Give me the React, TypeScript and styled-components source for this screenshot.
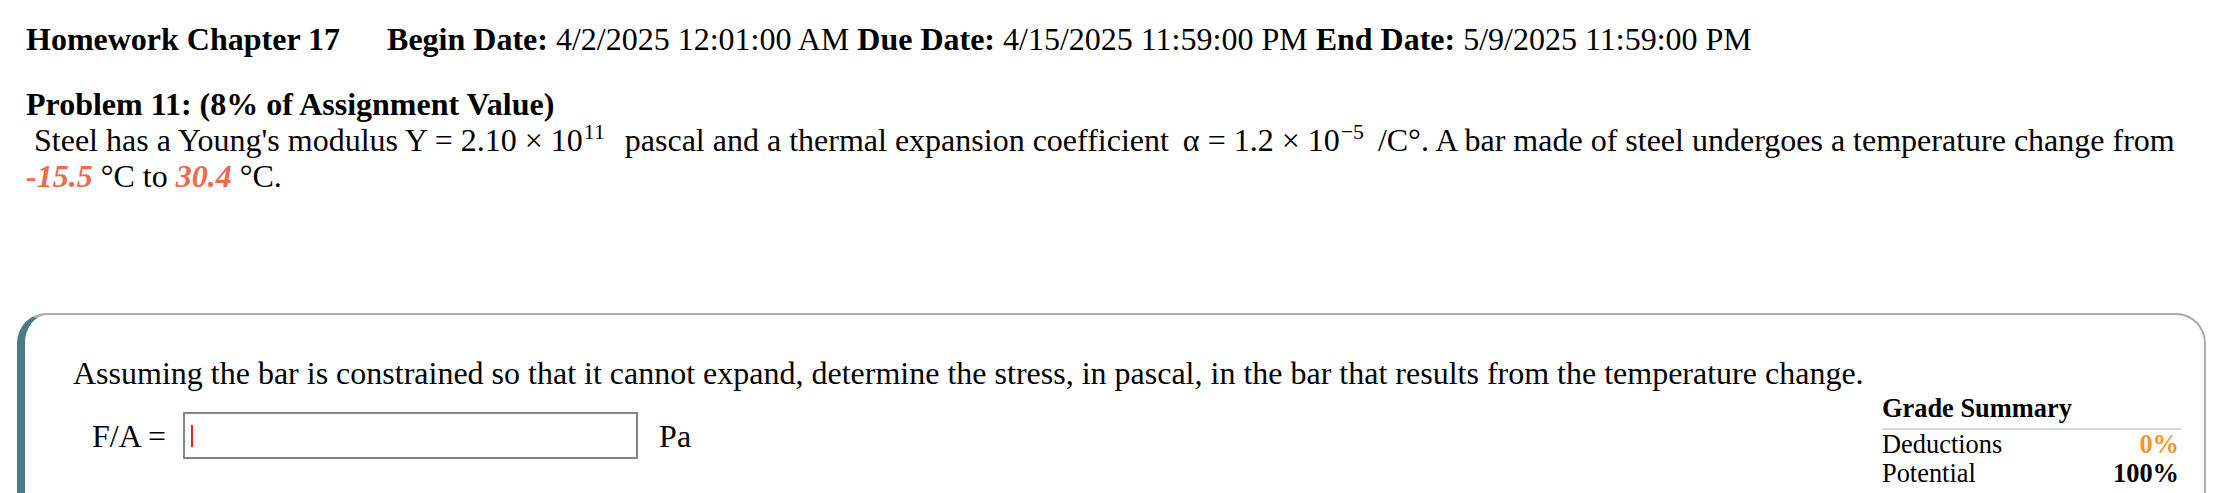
import React from "react";
import styled, { createGlobalStyle } from "styled-components";

const GlobalStyle = createGlobalStyle`
  html, body {
    margin: 0;
    padding: 0;
    background: #ffffff;
  }
  body {
    font-family: "Liberation Serif", "Times New Roman", serif;
    color: #000000;
  }
`;

const Page = styled.div`
  width: 2220px;
  padding-top: 21px;
  box-sizing: border-box;
`;

const Intro = styled.section`
  padding: 0 14px 0 26px;
  font-size: 32px;
  line-height: 36px;
`;

const HeaderLine = styled.div`
  white-space: nowrap;
  margin-bottom: 28.5px;
`;

const AssignmentName = styled.b`
  font-weight: bold;
  margin-right: 47px;
`;

const Label = styled.b`
  font-weight: bold;
`;

const ProblemTitle = styled.div`
  font-weight: bold;
`;

const Statement = styled.div``;

const Given = styled.span`
  font-weight: bold;
  font-style: italic;
  color: #ec6a4e;
`;

const Sup = styled.sup<{ $trail?: number }>`
  font-size: 0.68em;
  line-height: 1;
  vertical-align: baseline;
  position: relative;
  top: -0.55em;
  margin-left: 1px;
  margin-right: ${(p) => p.$trail ?? 0}px;
`;

const Symbol = styled.span<{ $lead?: number }>`
  margin-left: ${(p) => p.$lead ?? 0}px;
`;

const QuestionBox = styled.section`
  margin: 119.5px 14px 0 17px;
  min-height: 260px;
  border: 2px solid #aaaaaa;
  border-left: 8px solid #4a7b87;
  border-radius: 30px 30px 0 0;
  border-bottom: none;
  padding: 39.5px 23px 0 48px;
`;

const QuestionText = styled.div`
  font-size: 32px;
  line-height: 36px;
`;

const AnswerRow = styled.div`
  display: flex;
  align-items: flex-start;
  margin-top: 3.5px;
`;

const AnswerGroup = styled.div`
  display: flex;
  align-items: center;
  margin: 18px 0 0 19px;
  font-size: 32px;
  line-height: 36px;
`;

const Variable = styled.span`
  margin-right: 17px;
`;

const InputWrap = styled.div`
  position: relative;
  width: 455px;
  height: 47px;
`;

const AnswerInput = styled.input`
  box-sizing: border-box;
  width: 100%;
  height: 100%;
  border: 2px solid #858585;
  border-radius: 0;
  padding: 0 10px;
  font-family: inherit;
  font-size: 28px;
  outline: none;
  background: #ffffff;
`;

const Caret = styled.span`
  position: absolute;
  left: 8px;
  top: 13px;
  width: 2px;
  height: 22px;
  background: #e5261f;
`;

const Unit = styled.span`
  margin-left: 21px;
`;

const Summary = styled.div`
  margin-left: auto;
  width: 299px;
  font-size: 26.4px;
  line-height: 29px;
`;

const SummaryHeading = styled.div`
  font-weight: bold;
  line-height: 28px;
  padding-bottom: 6px;
  border-bottom: 2px solid #d6d6d6;
`;

const SummaryRow = styled.div`
  display: flex;
  justify-content: space-between;
`;

const SummaryValue = styled.span<{ $tone?: "orange" | "black" }>`
  font-weight: bold;
  padding-right: 2px;
  color: ${(p) => (p.$tone === "orange" ? "#f0972f" : "#000000")};
`;

export default function App() {
  return (
    <>
      <GlobalStyle />
      <Page>
        <Intro>
          <HeaderLine>
            <AssignmentName>Homework Chapter 17</AssignmentName>
            <Label>Begin Date:</Label> 4/2/2025 12:01:00 AM <Label>Due Date:</Label>{" "}
            4/15/2025 11:59:00 PM <Label>End Date:</Label> 5/9/2025 11:59:00 PM
          </HeaderLine>
          <ProblemTitle>Problem 11: (8% of Assignment Value)</ProblemTitle>
          <Statement>
            {"\u00a0"}Steel has a Young's modulus Y = 2.10 × 10<Sup $trail={4}>11</Sup>
            {"\u00a0"} pascal and a thermal expansion coefficient{" "}
            <Symbol $lead={6}>α</Symbol> = 1.2 × 10
            <Sup $trail={6}>−5</Sup> /C°. A bar made of steel undergoes a temperature change from{" "}
            <Given>-15.5</Given> °C to <Given>30.4</Given> °C.
          </Statement>
        </Intro>
        <QuestionBox>
          <QuestionText>
            Assuming the bar is constrained so that it cannot expand, determine the stress, in
            pascal, in the bar that results from the temperature change.
          </QuestionText>
          <AnswerRow>
            <AnswerGroup>
              <Variable>F/A =</Variable>
              <InputWrap>
                <AnswerInput type="text" aria-label="F/A" />
                <Caret />
              </InputWrap>
              <Unit>Pa</Unit>
            </AnswerGroup>
            <Summary>
              <SummaryHeading>Grade Summary</SummaryHeading>
              <SummaryRow>
                <span>Deductions</span>
                <SummaryValue $tone="orange">0%</SummaryValue>
              </SummaryRow>
              <SummaryRow>
                <span>Potential</span>
                <SummaryValue>100%</SummaryValue>
              </SummaryRow>
            </Summary>
          </AnswerRow>
        </QuestionBox>
      </Page>
    </>
  );
}
